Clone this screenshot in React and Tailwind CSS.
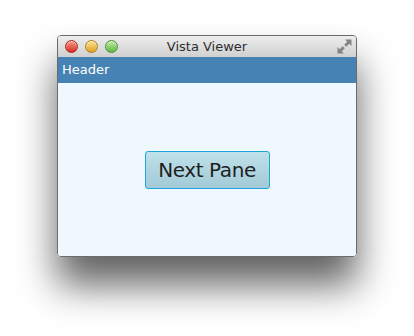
import React from 'react';

const font = { fontFamily: '"DejaVu Sans", "Liberation Sans", sans-serif' };

const TrafficLight = ({ from, to, ring }) => (
    <div className={`w-[13px] h-[13px] rounded-full border ${ring} bg-gradient-to-b ${from} ${to} shadow-[inset_0_1px_1px_rgba(255,255,255,0.5)]`} />
);

const ResizeIcon = () => (
    <svg width="17" height="17" viewBox="0 0 17 17" className="text-[#858585]">
        <path d="M9 1.5h6.5V8l-2.2-2.2-3 3-2.1-2.1 3-3z" fill="currentColor" />
        <path d="M8 15.5H1.5V9l2.2 2.2 3-3 2.1 2.1-3 3z" fill="currentColor" />
    </svg>
);

const App = () => {
    return (
        <div className="w-[414px] h-[336px] bg-white overflow-hidden pt-[35px]" style={font}>
            <div className="mx-auto w-[300px] h-[222px] flex flex-col rounded-[4px] overflow-hidden border border-[#6b6b6b] shadow-[0_28px_38px_rgba(0,0,0,0.62)]">
                {/* Title Bar */}
                <div className="relative h-[21px] shrink-0 flex items-center pl-[7px] pr-[3px] bg-gradient-to-b from-[#ededed] to-[#d0d0d0]">
                    <div className="flex items-center gap-[7px]">
                        <TrafficLight from="from-[#f5958d]" to="to-[#d9231b]" ring="border-[#a8261d]" />
                        <TrafficLight from="from-[#fbe08a]" to="to-[#e0a21c]" ring="border-[#b07d1a]" />
                        <TrafficLight from="from-[#c2eba0]" to="to-[#5fb840]" ring="border-[#4a8c32]" />
                    </div>
                    <div className="absolute inset-0 flex items-center justify-center text-[13px] text-[#2e2e2e] pointer-events-none">
                        Vista Viewer
                    </div>
                    <div className="ml-auto">
                        <ResizeIcon />
                    </div>
                </div>

                {/* Header */}
                <div className="h-[26px] shrink-0 flex items-center px-[4px] bg-[#4682b4] text-white text-[13px]">
                    Header
                </div>

                {/* Content */}
                <div className="flex-1 bg-[#f0f8ff] flex items-center justify-center">
                    <button className="w-[125px] h-[38px] rounded-[3px] border border-[#1fa6d8] bg-gradient-to-b from-[#bfe1ea] to-[#a2cad8] text-[#1e1e1e] text-[20px] tracking-[-0.02em]">
                        Next Pane
                    </button>
                </div>
            </div>
        </div>
    );
};

export default App;
